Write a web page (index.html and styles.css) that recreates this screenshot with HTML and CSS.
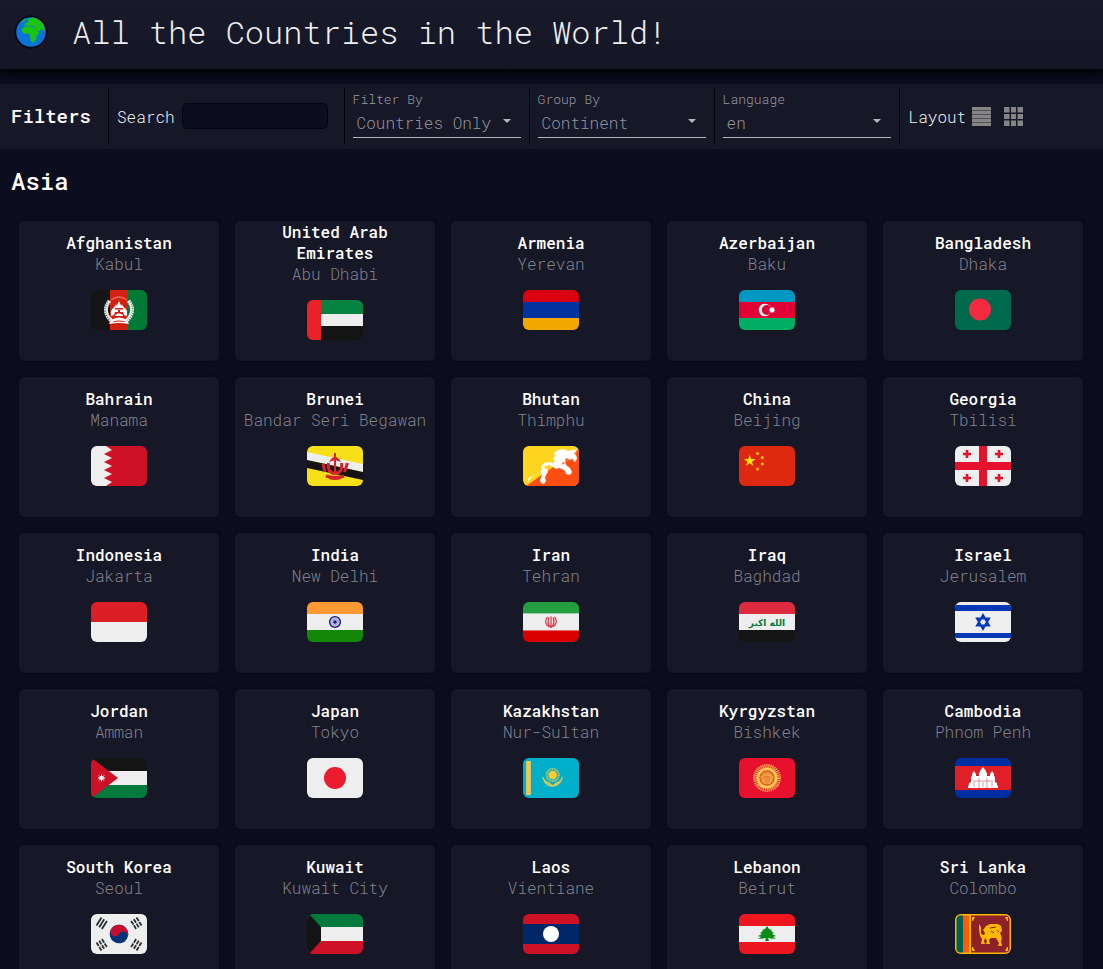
FILE: index.html
```html
<!DOCTYPE html>
<html lang="en">
<head>
  <meta charset="UTF-8">
  <meta name="viewport" content="width=device-width, initial-scale=1">
  <title>All the Countries in the World!</title>
  <link rel="stylesheet" href="styles.css">
</head>
<body>

  <header class="header">
    <svg class="globe" viewBox="0 0 34 34" aria-hidden="true">
      <circle cx="17" cy="17" r="16.5" fill="#05050f"/>
      <circle cx="17" cy="17" r="14.8" fill="#0a74da"/>
      <path d="M7.7 14.5 9 12.6l2-1.2 3 .2 2-.6 2.500 1.200 2.500.2 1.500 2 1 2 1.800.8-.6 1.600-2.400 2.200.2 2.500-1.300 1.400-1.200 2.300-1.600.6-1.500-1.800-.6-3.300-.6-1.900-.4-2-1.900-.3-2.900.2-2.200-1.600z" fill="#1bc411"/>
      <path d="M10.500 9.800l.6-1.800 2.200-.3 1.400-1.500-1-1.200 1.800-1.800 3.500-.7 3.500.9 4 2.500 2.700 3.600 1.300 4-.1 3-1.600-.7-1.200-1.700-1.500 1-.9 1.500-1.800-.5-1.700-2.600-.1-1.600-2.400-.4-1.300-1-1.600 1-1.300-1-1.900.8z" fill="#1bc411"/>
      <path d="M7 7.500l2.500-3 3-1.500-1 2-2.500 1.800z" fill="#1bc411"/>
    </svg>
    <h1 class="title">All the Countries in the World!</h1>
  </header>

  <form class="filters">
    <h2 class="filters-title">Filters</h2>
    <div class="filter search">
      <label for="search">Search</label>
      <input type="text" id="search">
    </div>
    <div class="filter option">
      <label for="filterBy">Filter By</label>
      <div class="select-box">
        <select id="filterBy"><option>Countries Only</option><option>All</option></select>
      </div>
    </div>
    <div class="filter option">
      <label for="groupBy">Group By</label>
      <div class="select-box">
        <select id="groupBy"><option>Continent</option><option>None</option></select>
      </div>
    </div>
    <div class="filter option">
      <label for="language">Language</label>
      <div class="select-box">
        <select id="language"><option>en</option><option>es</option></select>
      </div>
    </div>
    <div class="filter layout">
      <span>Layout</span>
      <button type="button" aria-label="List layout">
        <svg viewBox="0 0 20 20"><path d="M0 0h19v19H0z" fill="#505055"/><path d="M0 0h19v3H0zM0 4h19v3H0zM0 8h19v3H0zM0 12h19v3H0zM0 16h19v3H0z"/></svg>
      </button>
      <button type="button" aria-label="Grid layout">
        <svg viewBox="0 0 20 20"><path d="M0 0h5.500v5.500H0zM7 0h5v5.500H7zM13.500 0H19v5.500h-5.500zM0 7h5.500v5H0zM7 7h5v5H7zM13.500 7H19v5h-5.500zM0 13.500h5.500V19H0zM7 13.500h5V19H7zM13.500 13.500H19V19h-5.500z"/></svg>
      </button>
    </div>
  </form>

  <main>
    <h2 class="continent">Asia</h2>
    <div class="countries">

      <div class="card">
        <h3>Afghanistan</h3>
        <p>Kabul</p>
        <svg class="flag" viewBox="0 0 56 40">
          <path fill="#141414" d="M0 0h19v40H0z"/><path fill="#d32011" d="M19 0h18v40H19z"/><path fill="#007a36" d="M37 0h19v40H37z"/>
          <path d="M20 10q8-6 16 0" fill="none" stroke="#ec6a5b" stroke-width="1.500"/>
          <path d="M18.500 11C13 17 14 26 21 31M37.500 11c5.500 6 4.500 15-2.500 20" fill="none" stroke="#eee" stroke-width="4" stroke-dasharray="1.600 .6"/>
          <path d="M19 11C14 17 15 26 22 31M37 11c5 6 4 15-3 20" fill="none" stroke="#eee" stroke-width="1.500"/>
          <path fill="#fff" d="M20 26v-5l2-3h1v-2l1 1 1-3 1 2 1-3 1-2 1 2 1 3 1-2 1 3 1-1v2h1l2 3v5l-3-1-1-3H24l-1 3z"/>
          <path fill="#fff" d="M24 25l4-2 4 2v1h-8zM20 30q8-5 16 0l2 4q-10-2-20 0z"/>
          <path fill="#d32011" d="M24 18h8v1.500h-8zM27 20h2v2h-2zM22 31.500q6-2 12 0v.8q-6-1.500-12 0z"/>
        </svg>
      </div>

      <div class="card">
        <h3>United Arab Emirates</h3>
        <p>Abu Dhabi</p>
        <svg class="flag" viewBox="0 0 56 40">
          <path fill="#068241" d="M14 0h42v14H14z"/><path fill="#eee" d="M14 14h42v12H14z"/><path fill="#141414" d="M14 26h42v14H14z"/><path fill="#ec2028" d="M0 0h14v40H0z"/>
        </svg>
      </div>

      <div class="card">
        <h3>Armenia</h3>
        <p>Yerevan</p>
        <svg class="flag" viewBox="0 0 56 40">
          <path fill="#d90012" d="M0 0h56v12H0z"/><path fill="#0033a0" d="M0 12h56v16H0z"/><path fill="#f2a800" d="M0 28h56v12H0z"/>
        </svg>
      </div>

      <div class="card">
        <h3>Azerbaijan</h3>
        <p>Baku</p>
        <svg class="flag" viewBox="0 0 56 40">
          <path fill="#0098c3" d="M0 0h56v12H0z"/><path fill="#e00034" d="M0 12h56v16H0z"/><path fill="#00ae65" d="M0 28h56v12H0z"/>
          <circle cx="26" cy="20" r="6.200" fill="#fff"/><circle cx="27.800" cy="20" r="5" fill="#e00034"/>
          <path fill="#fff" d="M33 16.500l.8 1.600 1.700-.6-.6 1.700 1.600.8-1.600.8.6 1.700-1.700-.6-.8 1.600-.8-1.600-1.700.6.6-1.700-1.600-.8 1.600-.8-.6-1.700 1.700.6z"/>
        </svg>
      </div>

      <div class="card">
        <h3>Bangladesh</h3>
        <p>Dhaka</p>
        <svg class="flag" viewBox="0 0 56 40">
          <path fill="#006a4d" d="M0 0h56v40H0z"/><circle cx="25" cy="19.500" r="11" fill="#f42a41"/>
        </svg>
      </div>

      <div class="card">
        <h3>Bahrain</h3>
        <p>Manama</p>
        <svg class="flag" viewBox="0 0 56 40">
          <path fill="#ce1126" d="M0 0h56v40H0z"/><path fill="#eee" d="M0 0h15l6 4-8 4 8 4-8 4 8 4-8 4 8 4-8 4 8 4-6 4H0z"/>
        </svg>
      </div>

      <div class="card">
        <h3>Brunei</h3>
        <p>Bandar Seri Begawan</p>
        <svg class="flag" viewBox="0 0 56 40">
          <path fill="#f7e017" d="M0 0h56v40H0z"/><path fill="#eee" d="M0 6l56 12v8L0 14z"/><path fill="#141414" d="M0 14l56 12v8L0 22z"/>
          <g fill="none" stroke="#d8232a" stroke-width="2">
            <path d="M28 7v21"/><path d="M21.500 17q-1.500 10 6.500 10.500 8-.5 6.500-10.500" stroke-width="3"/>
            <path d="M16 18l2 8M40.500 17l-3 9" stroke-width="3"/><path d="M19 30q9 3 18 0" stroke-width="3"/><path d="M22 32q6 2 12 0"/>
          </g>
          <path d="M22 16l2-3 4-3 4 3 2 3-6-2z" fill="#d8232a"/>
        </svg>
      </div>

      <div class="card">
        <h3>Bhutan</h3>
        <p>Thimphu</p>
        <svg class="flag" viewBox="0 0 56 40">
          <path fill="#ffd520" d="M0 0h56v40H0z"/><path fill="#ff4e12" d="M56 3v37H3z"/>
          <path fill="#fff" d="M4 37l4-5 4-4 4-1 3-3-1-3 3-4 5-1 4 1 2-2-2-2 2-3-1-3 4-3 6-1 4 2 5-1 5-1-3 2 2 1-3 1 2 2 1 3-1 3-2 1-1-3-4 1-3 1-1 2 2 3 3 2 2 4-2 3-4-1-1-3-3-2-3-1-3 1-3-2-4-2-4 1-1 2 3 1 1 3-2 3-1 3 1 3-2 3-3-1-1-3 2-5-1-3-4 1-4 3-4 1z"/>
          <path fill="#ff4e12" d="M43 12l4 2-5 1zM39 17l3-1-2 3z"/>
        </svg>
      </div>

      <div class="card">
        <h3>China</h3>
        <p>Beijing</p>
        <svg class="flag" viewBox="0 0 56 40">
          <path fill="#de2910" d="M0 0h56v40H0z"/>
          <path fill="#ffde02" d="M10.700 8.700l1.400 4.300h4.500L13 15.700l1.400 4.300-3.700-2.700L7 20l1.400-4.300L4.800 13h4.500z"/>
          <g fill="#f8b40c"><circle cx="18.500" cy="7.500" r="1.600"/><circle cx="23.300" cy="11.700" r="1.600"/><circle cx="23.300" cy="18" r="1.600"/><circle cx="18.500" cy="23" r="1.600"/></g>
        </svg>
      </div>

      <div class="card">
        <h3>Georgia</h3>
        <p>Tbilisi</p>
        <svg class="flag" viewBox="0 0 56 40">
          <path fill="#eee" d="M0 0h56v40H0z"/><path fill="#e8112d" d="M24 0h8v40h-8zM0 16h56v8H0z"/>
          <path stroke="#e8112d" stroke-width="2.600" d="M8 8h8M12 4v8M40 8h8M44 4v8M8 32h8M12 28v8M40 32h8M44 28v8"/>
        </svg>
      </div>

      <div class="card">
        <h3>Indonesia</h3>
        <p>Jakarta</p>
        <svg class="flag" viewBox="0 0 56 40">
          <path fill="#dc1f26" d="M0 0h56v20H0z"/><path fill="#eee" d="M0 20h56v20H0z"/>
        </svg>
      </div>

      <div class="card">
        <h3>India</h3>
        <p>New Delhi</p>
        <svg class="flag" viewBox="0 0 56 40">
          <path fill="#ff9933" d="M0 0h56v12H0z"/><path fill="#eee" d="M0 12h56v16H0z"/><path fill="#138808" d="M0 28h56v12H0z"/>
          <circle cx="28" cy="20" r="5.400" fill="#c9c9ea" stroke="#17177d" stroke-width="1.400"/><circle cx="28" cy="20" r="3" fill="none" stroke="#7d7dc4" stroke-dasharray="1 .6"/><circle cx="28" cy="20" r="1.800" fill="#17177d"/>
        </svg>
      </div>

      <div class="card">
        <h3>Iran</h3>
        <p>Tehran</p>
        <svg class="flag" viewBox="0 0 56 40">
          <path fill="#239f40" d="M0 0h56v11H0z"/><path fill="#9bd1a8" d="M0 11h56v1H0z"/><path fill="#eee" d="M0 12h56v16H0z"/><path fill="#e96667" d="M0 28h56v1H0z"/><path fill="#da0001" d="M0 29h56v11H0z"/>
          <path d="M28 14.500V26M24.500 15q-4.500 5.500 1.500 10M31.500 15q4.500 5.500-1.500 10M26 15.500q-2.500 5.500 1.500 9.500M30 15.500q2.500 5.500-1.500 9.500" fill="none" stroke="#d73a48" stroke-width="1.300"/>
        </svg>
      </div>

      <div class="card">
        <h3>Iraq</h3>
        <p>Baghdad</p>
        <svg class="flag" viewBox="0 0 56 40">
          <path fill="#dc2b3f" d="M0 0h56v12H0z"/><path fill="#eee" d="M0 12h56v16H0z"/><path fill="#141414" d="M0 28h56v12H0z"/>
          <text class="takbir" x="28" y="24" text-anchor="middle">الله اكبر</text>
        </svg>
      </div>

      <div class="card">
        <h3>Israel</h3>
        <p>Jerusalem</p>
        <svg class="flag" viewBox="0 0 56 40">
          <path fill="#eee" d="M0 0h56v40H0z"/><path fill="#0038b8" d="M0 3h56v6H0zM0 31h56v5H0z"/>
          <path d="M28 13l6 10.500H22zM28 27l-6-10.500h12z" fill="none" stroke="#0038b8" stroke-width="2"/>
        </svg>
      </div>

      <div class="card">
        <h3>Jordan</h3>
        <p>Amman</p>
        <svg class="flag" viewBox="0 0 56 40">
          <path fill="#141414" d="M0 0h56v13H0z"/><path fill="#eee" d="M0 13h56v14H0z"/><path fill="#007a3d" d="M0 27h56v13H0z"/><path fill="#ce1126" d="M0 1l2 0 25 19L2 39H0z"/>
          <circle cx="10.500" cy="20" r="2" fill="#fff"/><path d="M10.500 16.500v7M8 17.500l5 5M13 17.500l-5 5M7 20h7" stroke="#fff"/>
        </svg>
      </div>

      <div class="card">
        <h3>Japan</h3>
        <p>Tokyo</p>
        <svg class="flag" viewBox="0 0 56 40">
          <path fill="#eee" d="M0 0h56v40H0z"/><circle cx="28" cy="20" r="11" fill="#ed1b2f"/>
        </svg>
      </div>

      <div class="card">
        <h3>Kazakhstan</h3>
        <p>Nur-Sultan</p>
        <svg class="flag" viewBox="0 0 56 40">
          <path fill="#00afca" d="M0 0h56v40H0z"/><path fill="#d8c56a" d="M3 3h5v34H3z"/><path d="M5.500 3v34" stroke="#f5d04c" stroke-width="2" stroke-dasharray="3 1"/>
          <circle cx="29.700" cy="17" r="6" fill="none" stroke="#c5c45f" stroke-width="2" stroke-dasharray="1 .5"/><circle cx="29.700" cy="17" r="4.300" fill="#fecb2f"/>
          <path d="M20 19q1 5 6 6l3.700 3 3.700-3q5-1 6-6M21 23q4 5 8 5M38 23q-4 5-8 5" fill="none" stroke="#d5c75a" stroke-width="1.400"/>
        </svg>
      </div>

      <div class="card">
        <h3>Kyrgyzstan</h3>
        <p>Bishkek</p>
        <svg class="flag" viewBox="0 0 56 40">
          <path fill="#e8112d" d="M0 0h56v40H0z"/>
          <circle cx="28" cy="20" r="11.500" fill="none" stroke="#f7a44b" stroke-width="5" stroke-dasharray="1.200 .7"/><circle cx="28" cy="20" r="10.500" fill="#ffc653"/>
          <circle cx="28" cy="20" r="7" fill="#f5a744" stroke="#d95727" stroke-width="1.300"/><path d="M22 22q5-8 12 0M22 18q7-6 12 0M26 25v-7M28 26v-8M30 25v-7" fill="none" stroke="#dc642d" stroke-width=".7"/>
        </svg>
      </div>

      <div class="card">
        <h3>Cambodia</h3>
        <p>Phnom Penh</p>
        <svg class="flag" viewBox="0 0 56 40">
          <path fill="#032ea1" d="M0 0h56v40H0z"/><path fill="#e01f26" d="M0 8h56v24H0z"/>
          <path fill="#fff" d="M13 30v-2l1-1v-2l2-1v-5l1-1v-2l2-3 2 3v2h3v-3l1-1v-1l3-4 3 4v1l1 1v3h3v-2l2-3 2 3v2l1 1v5l2 1v2l1 1v2z"/>
          <path d="M18 23h20M19 24v5M24 20v10M28 24v5M32 20v10M37 24v5" stroke="#cf6d70" stroke-width=".7"/>
        </svg>
      </div>

      <div class="card">
        <h3>South Korea</h3>
        <p>Seoul</p>
        <svg class="flag" viewBox="0 0 56 40">
          <path fill="#eee" d="M0 0h56v40H0z"/>
          <g transform="rotate(30 28 20)">
            <circle cx="28" cy="20" r="9.300" fill="#003478"/>
            <path fill="#c60c30" d="M18.700 20a9.300 9.300 0 0 1 18.600 0 4.650 4.650 0 0 0-9.300 0 4.650 4.650 0 0 1-9.300 0z"/>
          </g>
          <g stroke="#292f33" stroke-width="1.800">
            <path d="M5.500 11.500l5-8M8.200 13.200l5-8M10.900 14.900l5-8"/>
            <path d="M50.500 11.500l-5-8M47.800 13.200l-5-8M45.100 14.900l-5-8M5.500 28.500l5 8M8.200 26.800l5 8M10.900 25.100l5 8M50.500 28.500l-5 8M47.800 26.800l-5 8M45.100 25.100l-5 8" stroke-dasharray="4.200 1"/>
          </g>
        </svg>
      </div>

      <div class="card">
        <h3>Kuwait</h3>
        <p>Kuwait City</p>
        <svg class="flag" viewBox="0 0 56 40">
          <path fill="#007a3d" d="M0 0h56v13H0z"/><path fill="#eee" d="M0 13h56v14H0z"/><path fill="#ce1126" d="M0 27h56v13H0z"/><path fill="#141414" d="M0 0h2l12 13v14L2 40H0z"/>
        </svg>
      </div>

      <div class="card">
        <h3>Laos</h3>
        <p>Vientiane</p>
        <svg class="flag" viewBox="0 0 56 40">
          <path fill="#ce1126" d="M0 0h56v40H0z"/><path fill="#002868" d="M0 10h56v20H0z"/><circle cx="28" cy="20" r="8" fill="#fff"/>
        </svg>
      </div>

      <div class="card">
        <h3>Lebanon</h3>
        <p>Beirut</p>
        <svg class="flag" viewBox="0 0 56 40">
          <path fill="#ee161f" d="M0 0h56v40H0z"/><path fill="#eee" d="M0 12h56v16H0z"/>
          <path fill="#0c8a18" d="M28 12l2 3 3 1-1 1 3 2-2 1 4 2-3 1 3 2-5-.5-3-.5 1 3h-4l1-3-3 .5-5 .5 3-2-3-1 4-2-2-1 3-2-1-1 3-1z"/>
        </svg>
      </div>

      <div class="card">
        <h3>Sri Lanka</h3>
        <p>Colombo</p>
        <svg class="flag" viewBox="0 0 56 40">
          <path fill="#ffb700" d="M0 0h56v40H0z"/><path fill="#005f56" d="M8 1.500v37H5Q1.500 38 1.500 34V6Q1.500 2 5 1.500z"/><path fill="#ff5b00" d="M8 1.500h6v37H8z"/><path fill="#8d2029" d="M16 1.500h35q3.500.5 3.500 4.500v28q0 4-3.500 4.500H16z"/>
          <path fill="#ffb700" d="M17 3h3l-2 4h-1zM53 3h-3l2 4h1zM17 37h3l-2-4h-1zM53 37h-3l2-4h1zM24 10l2 3v7l3 1 1-2-2-3 3-4 4-2h8l3 2 1 5-2 2 2 5-1 3 1 5h-4l1-3-3-5h-5l-2 2 1 4h-4l1-3-2-3-1 3 1 3h-4l1-5-2-3-1-7z"/>
          <path d="M35 14l6-1M36 17l3 2M42 16l2 2" stroke="#8d2029"/>
        </svg>
      </div>

    </div>
  </main>

</body>
</html>
```
FILE: styles.css
```css
* {
  box-sizing: border-box;
}

body {
  margin: 0;
  background: #0c0d1e;
  color: #fff;
  font-family: "Roboto Mono", "Liberation Mono", monospace;
  font-size: 16px;
  line-height: 21px;
}

h1, h2, h3, p {
  margin: 0;
}

/* header */
.header {
  display: flex;
  align-items: center;
  gap: 24px;
  height: 69px;
  padding: 0 14px 5px;
  background: linear-gradient(#191a29, #141525);
  box-shadow: 0 2px 10px 2px #000;
}

.globe {
  width: 34px;
  height: 34px;
  flex: none;
}

.title {
  font-size: 32px;
  font-weight: 300;
  line-height: 42px;
  color: #eeeef5;
}

/* filters */
.filters {
  display: flex;
  flex-wrap: wrap;
  margin-top: 15px;
  padding: 3px 0 4px;
  background: #161727;
}

.filters-title {
  width: 108px;
  padding-left: 11px;
  font-size: 19px;
  font-weight: 500;
  line-height: 58px;
}

.filter {
  height: 58px;
  padding: 0 8px;
  border-left: 1px solid #05050d;
}

.search,
.layout {
  display: flex;
  align-items: center;
  color: #f2f2f6;
  font-weight: 300;
}

.search {
  padding-right: 16px;
}

.search input {
  width: 146px;
  height: 26px;
  margin-left: 7px;
  padding: 0 8px;
  border: 1px solid #05050f;
  border-radius: 5px;
  background: #0c0d1e;
  color: #fff;
  font: inherit;
}

.option {
  padding-top: 3px;
}

.option label {
  display: block;
  font-size: 13px;
  font-weight: 300;
  line-height: 18px;
  color: #9a9aa3;
}

.select-box {
  position: relative;
  width: 168px;
}

.select-box:after {
  content: "";
  position: absolute;
  top: 11px;
  right: 10px;
  border: 4px solid transparent;
  border-top-color: #b5b5bd;
  border-bottom: 0;
  pointer-events: none;
}

.select-box select {
  display: block;
  width: 100%;
  height: 30px;
  padding: 0 4px;
  border: 0;
  border-bottom: 1px solid #b5b5bd;
  border-radius: 0;
  background: transparent;
  color: #93939d;
  font: inherit;
  font-weight: 300;
  appearance: none;
}

.layout {
  padding-left: 9px;
}

.layout button {
  width: 20px;
  height: 22px;
  margin: 0 6px;
  padding: 2px 0 0;
  border: 0;
  background: none;
}

.layout svg {
  display: block;
  width: 20px;
  height: 20px;
  fill: #858585;
}

/* countries */
.continent {
  padding: 16px 11px 24px;
  font-size: 24px;
  font-weight: 500;
  line-height: 32px;
}

.countries {
  display: grid;
  grid-template-columns: repeat(auto-fill, 200px);
  grid-auto-rows: 140px;
  gap: 16px;
  justify-content: center;
  padding: 0 9px 16px 8px;
}

.card {
  display: flex;
  flex-direction: column;
  align-items: center;
  justify-content: center;
  padding: 0 8px;
  border-radius: 5px;
  background: #161727;
  box-shadow: 0 0 4px #080814;
  text-align: center;
}

.card h3 {
  font-size: 16px;
  font-weight: 500;
}

.card p {
  font-weight: 300;
  color: #83838c;
}

.flag {
  flex: none;
  width: 56px;
  height: 40px;
  margin: 16px 0 21px;
  border-radius: 6px;
  overflow: hidden;
}

.takbir {
  fill: #007a3d;
  font-family: "DejaVu Sans", sans-serif;
  font-size: 9px;
  font-weight: bold;
}
```
